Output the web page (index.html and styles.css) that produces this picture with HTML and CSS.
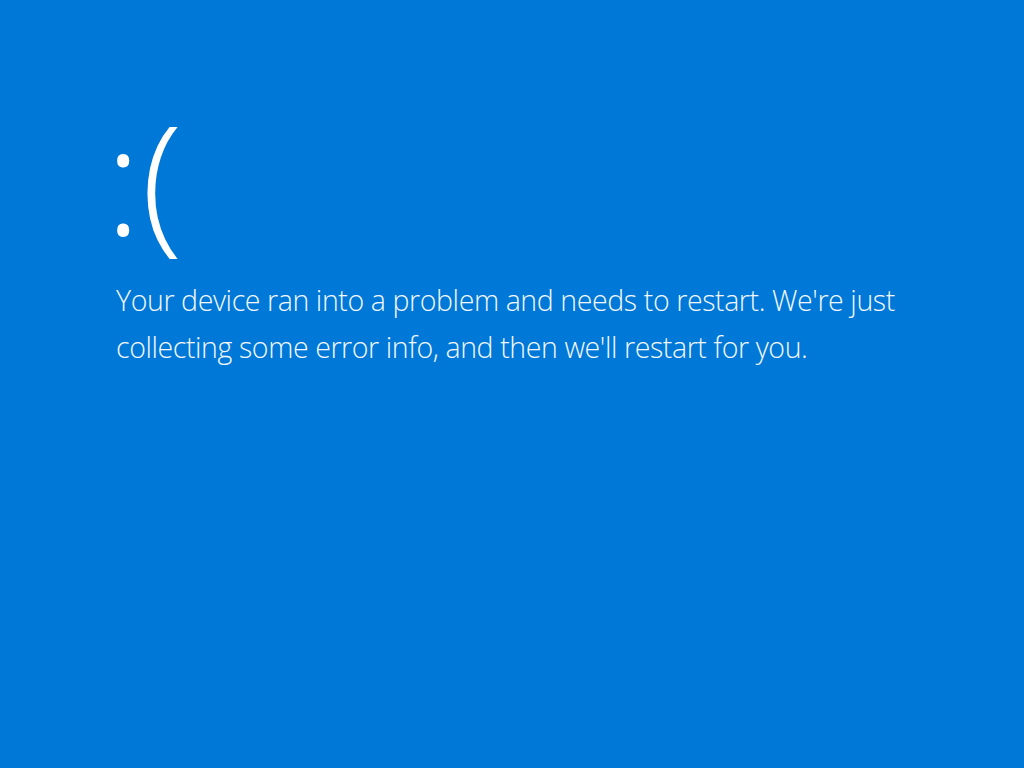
FILE: index.html
```html
<!DOCTYPE html>
<html lang="en">
	<head>
		<meta charset="UTF-8" />
		<meta name="viewport" content="width=device-width, initial-scale=1.0" />
		<title>Stop</title>
		<link rel="stylesheet" href="styles.css">
	</head>
	<body>
		<main class="screen">
			<div class="face">:(</div>
			<p class="message">Your device ran into a problem and needs to restart. We're just<br />
				collecting some error info, and then we'll restart for you.</p>
		</main>
	</body>
</html>
```

FILE: styles.css
```css
*{
	padding: 0;
	margin: 0;
	box-sizing: border-box;
}
html, body {
	height: 100%;
}
body {
	background-color: #0078d7;
	color: #ffffff;
	font-family: "Open Sans", "Liberation Sans", sans-serif;
	font-weight: 300;
}
.screen {
	padding: 97px 0 0 116px;
}
.face {
	margin-left: -11px;
	font-size: 152px;
	line-height: 160px;
	letter-spacing: 0;
}
.message {
	margin-top: 20px;
	font-size: 28.5px;
	line-height: 47px;
	letter-spacing: -0.4px;
	color: #f2f7fc;
}
```
